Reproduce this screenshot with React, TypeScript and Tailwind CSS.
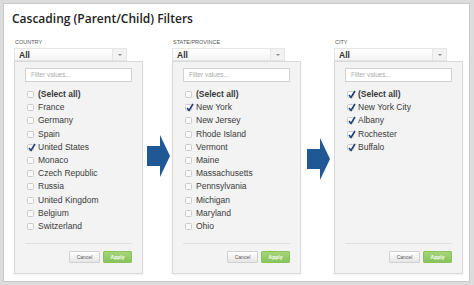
import React from 'react';

type Filter = {
  label: string;
  items: string[];
  checked: string[];
};

const FILTERS: Filter[] = [
  {
    label: 'Country',
    items: [
      'France',
      'Germany',
      'Spain',
      'United States',
      'Monaco',
      'Czech Republic',
      'Russia',
      'United Kingdom',
      'Belgium',
      'Switzerland',
    ],
    checked: ['United States'],
  },
  {
    label: 'State/Province',
    items: [
      'New York',
      'New Jersey',
      'Rhode Island',
      'Vermont',
      'Maine',
      'Massachusetts',
      'Pennsylvania',
      'Michigan',
      'Maryland',
      'Ohio',
    ],
    checked: ['New York'],
  },
  {
    label: 'City',
    items: ['New York City', 'Albany', 'Rochester', 'Buffalo'],
    checked: ['(Select all)', 'New York City', 'Albany', 'Rochester', 'Buffalo'],
  },
];

function CheckBox({ checked }: { checked: boolean }) {
  return (
    <span className="relative mr-[4px] block h-[7px] w-[7px] shrink-0 rounded-[1.5px] border border-[#cbcbcb] bg-[#f9f9f9]">
      {checked && (
        <svg
          className="absolute left-[-0.5px] top-[-2px]"
          width="8"
          height="9"
          viewBox="0 0 8 9"
        >
          <path d="M1 5 L3 7.4 L7 1" fill="none" stroke="#1f3d78" strokeWidth="1.6" />
        </svg>
      )}
    </span>
  );
}

function Arrow() {
  return (
    <svg width="23" height="42" viewBox="0 0 23 42">
      <path d="M0 11 H13 V0 L23 21 L13 42 V31 H0 Z" fill="#1f5894" />
    </svg>
  );
}

function FilterColumn({ filter }: { filter: Filter }) {
  const all = ['(Select all)', ...filter.items];
  return (
    <div className="flex w-[129px] flex-col">
      {/* label + dropdown */}
      <div className="h-[11px] pl-[1px] pt-[2px] text-[5.5px] uppercase leading-[7px] text-[#555]">
        {filter.label}
      </div>
      <div className="flex h-[13px] w-[113px] items-stretch border border-[#e6e6e6] bg-gradient-to-b from-white to-[#f4f4f4]">
        <span className="flex-1 pl-[4px] text-[8.5px] font-bold leading-[12px] text-[#333]">All</span>
        <span className="flex w-[14px] items-center justify-center border-l border-[#e6e6e6] bg-[#f2f2f2]">
          <span className="block h-0 w-0 border-x-[2.5px] border-t-[2.5px] border-x-transparent border-t-[#888]" />
        </span>
      </div>

      {/* dropdown panel */}
      <div className="flex h-[213px] flex-col border border-[#d9d9d9] bg-[#f3f3f3] px-[10px] pt-[6px] shadow-[0_1px_2px_rgba(0,0,0,0.06)]">
        <div className="h-[14px] border border-[#d2d2d2] bg-white pl-[5px] text-[6.4px] leading-[12px] text-[#aaa]">
          Filter values...
        </div>
        <div className="mt-[6px] pl-[2px]">
          {all.map((item, i) => (
            <div key={item} className="flex h-[13.2px] items-center">
              <CheckBox checked={filter.checked.includes(item)} />
              <span
                className={`text-[8.5px] leading-[13px] text-[#3a3a3a] ${
                  i === 0 ? 'font-bold' : ''
                }`}
              >
                {item}
              </span>
            </div>
          ))}
        </div>
        <div className="mt-auto flex h-[30px] justify-end gap-[3px] border-t border-[#dedede] pt-[7px]">
          <button className="h-[12px] w-[31px] rounded-[1px] border border-[#d0d0d0] bg-gradient-to-b from-white to-[#e6e6e6] text-[5px] leading-[10px] text-[#555]">
            Cancel
          </button>
          <button className="h-[12px] w-[29px] rounded-[1px] border border-[#88c35c] bg-gradient-to-b from-[#a5d57a] to-[#88c35c] text-[5px] font-bold leading-[10px] text-white">
            Apply
          </button>
        </div>
      </div>
    </div>
  );
}

export default function App() {
  return (
    <div
      className="h-[285px] w-[474px] bg-[#dcdcdc] p-[3px]"
      style={{ fontFamily: '"Liberation Sans", Arial, sans-serif' }}
    >
      <div className="h-[279px] w-[467px] border border-[#c9c9c9] bg-white pl-[10px] pt-[5px]">
        <h1
          className="-ml-[2px] h-[28px] text-[12px] font-semibold leading-[20px] text-[#222]"
          style={{ fontFamily: '"Open Sans", "Liberation Sans", sans-serif' }}
        >
          Cascading (Parent/Child) Filters
        </h1>
        <div className="flex items-start">
          <FilterColumn filter={FILTERS[0]} />
          <div className="ml-[4px] mr-[2px] mt-[98px]">
            <Arrow />
          </div>
          <FilterColumn filter={FILTERS[1]} />
          <div className="ml-[6px] mr-[4px] mt-[101px]">
            <Arrow />
          </div>
          <FilterColumn filter={FILTERS[2]} />
        </div>
      </div>
    </div>
  );
}
